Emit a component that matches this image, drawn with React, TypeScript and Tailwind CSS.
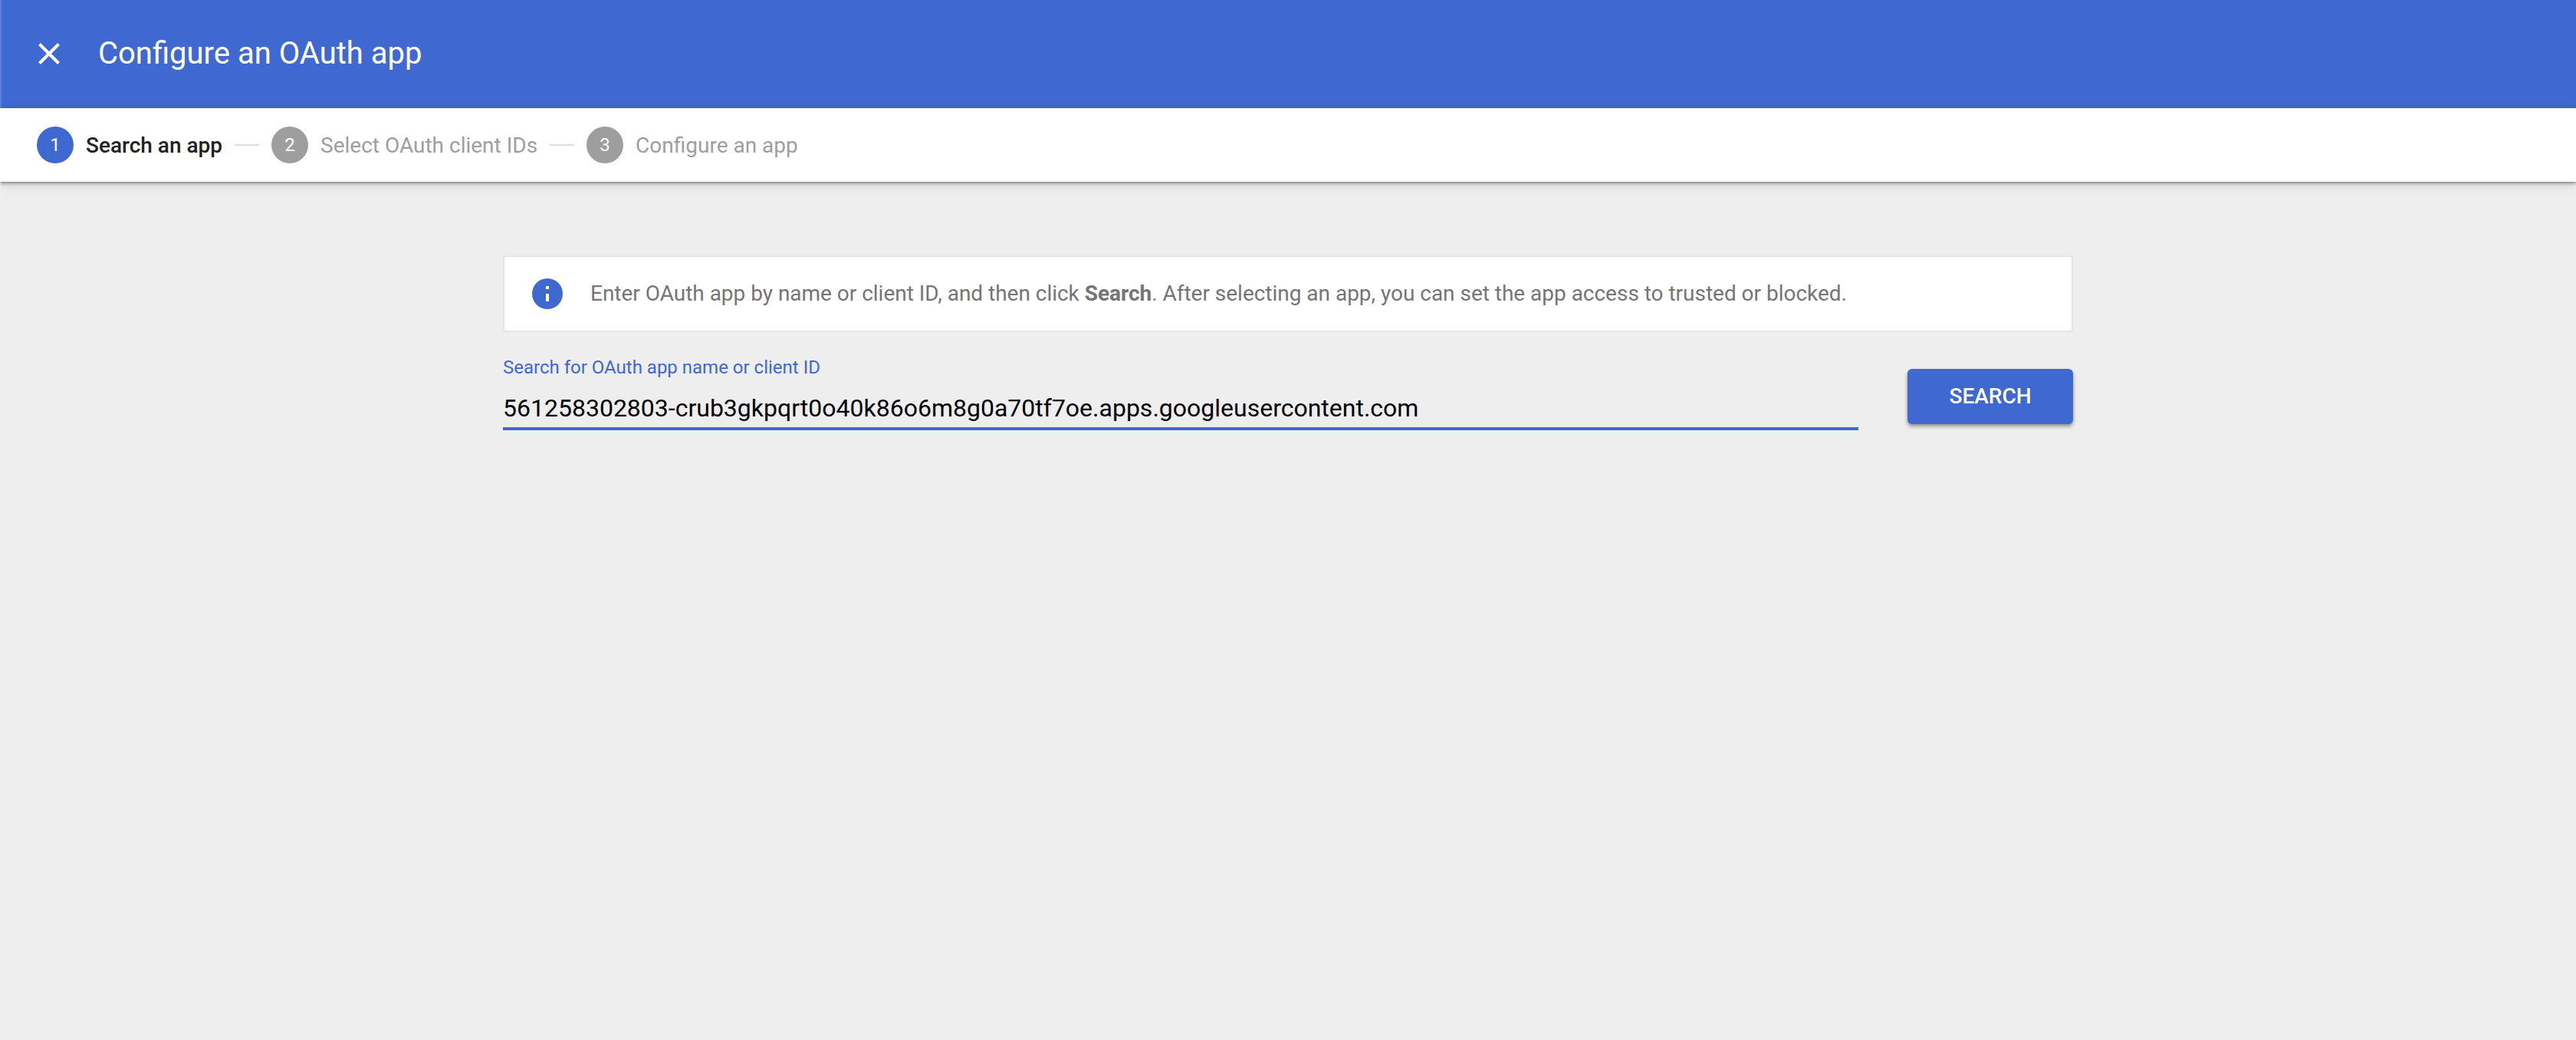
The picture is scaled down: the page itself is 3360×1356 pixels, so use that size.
export default function App() {
  const steps = [
    { n: "1", label: "Search an app", active: true },
    { n: "2", label: "Select OAuth client IDs", active: false },
    { n: "3", label: "Configure an app", active: false },
  ];
  return (
    <div className="relative flex h-[1356px] w-[3360px] flex-col overflow-hidden bg-[#eeeeee] font-['Roboto',sans-serif]">
      <header className="flex h-[141px] items-center bg-[#3f68d1] pb-[2px] pl-[50px] text-white">
        <svg viewBox="0 0 28 28" className="h-[28px] w-[28px]" fill="none" stroke="white" strokeWidth="4">
          <path d="M1.5 1.5 L26.5 26.5 M26.5 1.5 L1.5 26.5" />
        </svg>
        <h1 className="ml-[50px] text-[40px] leading-none font-normal">Configure an OAuth app</h1>
      </header>
      <nav className="flex h-[96px] items-center gap-[16px] bg-white pl-[48px] shadow-[0_2px_4px_rgba(0,0,0,0.4),0_4px_16px_rgba(0,0,0,0.12)]">
        {steps.map((s, i) => (
          <div key={s.n} className="flex items-center gap-[16px]">
            {i > 0 && <div className="h-[2px] w-[32px] bg-[#dddddd]" />}
            <div
              className={
                s.active
                  ? "flex h-[48px] w-[48px] items-center justify-center rounded-full bg-[#3f68d1] text-[24px] text-white"
                  : "flex h-[48px] w-[48px] items-center justify-center rounded-full bg-[#9e9e9e] text-[24px] text-white"
              }
            >
              {s.n}
            </div>
            <span
              className={
                s.active
                  ? "pt-[2px] text-[28px] font-medium text-[#212121]"
                  : "pt-[2px] text-[28px] font-normal text-[#9e9e9e]"
              }
            >
              {s.label}
            </span>
          </div>
        ))}
      </nav>
      <main className="mx-auto mt-[96px] w-[2048px]">
        <div className="flex h-[100px] items-center rounded-[4px] border-2 border-[#e4e4e4] bg-white pl-[36px]">
          <svg viewBox="0 0 40 40" className="h-[40px] w-[40px]">
            <circle cx="20" cy="20" r="20" fill="#3f68d1" />
            <rect x="18" y="20" width="4" height="10" fill="white" />
            <rect x="18" y="10" width="4" height="4" fill="white" />
          </svg>
          <p className="ml-[36px] text-[28px] tracking-[-0.02px] text-[#757575]">
            Enter OAuth app by name or client ID, and then click <b className="font-bold">Search</b>. After selecting an app, you can set the app access to trusted or blocked.
          </p>
        </div>
        <div className="mt-[32px] flex items-start justify-between">
          <div className="w-[1768px]">
            <label className="block text-[24px] leading-[28px] text-[#3f68d1]">Search for OAuth app name or client ID</label>
            <div className="mt-[12px] h-[56px] border-b-4 border-[#3f68d1] pt-[5px] text-[32px] leading-[44px] text-black">
              561258302803-crub3gkpqrt0o40k86o6m8g0a70tf7oe.apps.googleusercontent.com
            </div>
          </div>
          <button className="mt-[16px] h-[72px] w-[216px] rounded-[6px] bg-[#3f68d1] text-[28px] font-medium text-white shadow-[0_3px_5px_rgba(0,0,0,0.4)]">
            SEARCH
          </button>
        </div>
      </main>
      <div className="absolute inset-y-0 left-0 w-[2px] bg-white/15" />
    </div>
  );
}
